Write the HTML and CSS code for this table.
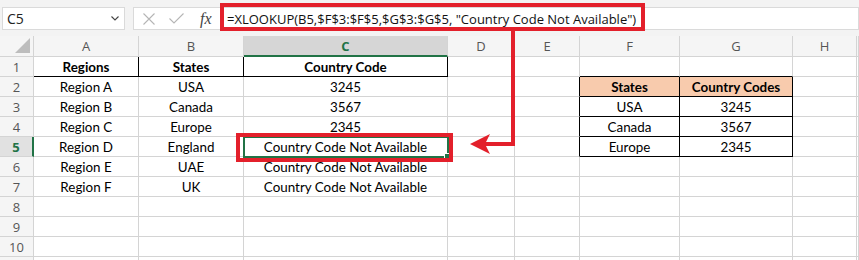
FILE: index.html
```html
<!DOCTYPE html>
<html lang="en">
<head>
    <meta charset="UTF-8">
    <title>XLOOKUP - not found value</title>
    <link rel="stylesheet" href="styles.css">
</head>
<body>
    <!-- Строка формул -->
    <div class="bar">
        <div class="namebox">
            <span>C5</span>
            <svg class="chev" width="8" height="5" viewBox="0 0 8 5"><path d="M0.5 0.5 L4 4 L7.5 0.5" fill="none" stroke="#444" stroke-width="1.1"/></svg>
        </div>
        <div class="fxbox">
            <svg width="12" height="12" viewBox="0 0 12 12"><path d="M0.5 0.5 L11.5 11.5 M11.5 0.5 L0.5 11.5" stroke="#b5b5b5" stroke-width="1.1"/></svg>
            <svg width="15" height="11" viewBox="0 0 15 11"><path d="M0.5 5.5 L5 10 L14.5 0.5" fill="none" stroke="#b5b5b5" stroke-width="1.1"/></svg>
            <span class="fx">fx</span>
        </div>
        <div class="formula">=XLOOKUP(B5,$F$3:$F$5,$G$3:$G$5, "Country Code Not Available")</div>
    </div>

    <!-- Лист -->
    <div class="sheet">
        <div class="corner"></div>
        <div class="colh">A</div><div class="colh">B</div><div class="colh sel">C</div><div class="colh">D</div><div class="colh">E</div><div class="colh">F</div><div class="colh">G</div><div class="colh">H</div><div class="colh"></div>

        <div class="rowh">1</div>
        <div class="c b br bb">Regions</div><div class="c b br bb">States</div><div class="c b br bb">Country Code</div><div class="c"></div><div class="c"></div><div class="c bb"></div><div class="c bb"></div><div class="c"></div><div class="c"></div>

        <div class="rowh">2</div>
        <div class="c">Region A</div><div class="c">USA</div><div class="c">3245</div><div class="c"></div><div class="c br"></div><div class="c b br bb peach">States</div><div class="c b br bb peach">Country Codes</div><div class="c"></div><div class="c"></div>

        <div class="rowh">3</div>
        <div class="c">Region B</div><div class="c">Canada</div><div class="c">3567</div><div class="c"></div><div class="c br"></div><div class="c br bb">USA</div><div class="c br bb">3245</div><div class="c"></div><div class="c"></div>

        <div class="rowh">4</div>
        <div class="c">Region C</div><div class="c">Europe</div><div class="c">2345</div><div class="c"></div><div class="c br"></div><div class="c br bb">Canada</div><div class="c br bb">3567</div><div class="c"></div><div class="c"></div>

        <div class="rowh sel">5</div>
        <div class="c">Region D</div><div class="c">England</div><div class="c active">Country Code Not Available</div><div class="c"></div><div class="c br"></div><div class="c br bb">Europe</div><div class="c br bb">2345</div><div class="c"></div><div class="c"></div>

        <div class="rowh">6</div>
        <div class="c">Region E</div><div class="c">UAE</div><div class="c">Country Code Not Available</div><div class="c"></div><div class="c"></div><div class="c"></div><div class="c"></div><div class="c"></div><div class="c"></div>

        <div class="rowh">7</div>
        <div class="c">Region F</div><div class="c">UK</div><div class="c">Country Code Not Available</div><div class="c"></div><div class="c"></div><div class="c"></div><div class="c"></div><div class="c"></div><div class="c"></div>

        <div class="rowh">8</div>
        <div class="c"></div><div class="c"></div><div class="c"></div><div class="c"></div><div class="c"></div><div class="c"></div><div class="c"></div><div class="c"></div><div class="c"></div>

        <div class="rowh">9</div>
        <div class="c"></div><div class="c"></div><div class="c"></div><div class="c"></div><div class="c"></div><div class="c"></div><div class="c"></div><div class="c"></div><div class="c"></div>

        <div class="rowh">10</div>
        <div class="c"></div><div class="c"></div><div class="c"></div><div class="c"></div><div class="c"></div><div class="c"></div><div class="c"></div><div class="c"></div><div class="c"></div>

        <!-- следующая строка уходит за нижний край -->
        <div class="rowh"></div>
        <div class="c"></div><div class="c"></div><div class="c"></div><div class="c"></div><div class="c"></div><div class="c"></div><div class="c"></div><div class="c"></div><div class="c"></div>
    </div>

    <!-- Красные пометки поверх листа -->
    <svg class="marks" width="859" height="260" viewBox="0 0 859 260">
        <rect x="222" y="5" width="421" height="24" fill="none" stroke="#e3202b" stroke-width="4"/>
        <rect x="238" y="135" width="213" height="25" fill="none" stroke="#e3202b" stroke-width="4"/>
        <path d="M513 31 V144 H484" fill="none" stroke="#e3202b" stroke-width="4"/>
        <path d="M470 144 L490 134 L485 144 L490 154 Z" fill="#e3202b"/>
    </svg>
</body>
</html>
```

FILE: styles.css
```css
body {
    margin: 0;
    width: 859px;
    height: 260px;
    overflow: hidden;
    position: relative;
    background-color: #fff;
    font-family: "Open Sans", sans-serif;
}
/* Строка формул */
.bar {
    height: 36px;
    box-sizing: border-box;
    padding: 7px 0 0 2px;
    display: flex;
    align-items: flex-start;
    background-color: #f3f3f3;
}
.namebox, .fxbox, .formula {
    height: 23px;
    box-sizing: border-box;
    background-color: #fff;
    border: 1px solid #dadada;
    display: flex;
    align-items: center;
}
.namebox {
    width: 123px;
    padding: 0 5px 0 4px;
    justify-content: space-between;
    font-size: 14px;
    color: #222;
}
.fxbox {
    width: 88px;
    margin-left: 8px;
    padding-left: 9px;
    gap: 14px;
}
.fx {
    font-family: "Liberation Serif", serif;
    font-style: italic;
    font-size: 16px;
    color: #444;
    margin-left: 2px;
}
.formula {
    flex: 1;
    padding-left: 5px;
    font-size: 13px;
    color: #111;
    white-space: nowrap;
}
/* Сетка листа */
.sheet {
    display: grid;
    grid-template-columns: 34px 105px 105px 204px 67px 65px 100px 113px 64px 1fr;
    grid-template-rows: 21px;
    grid-auto-rows: 20px;
}
.corner, .colh, .rowh {
    background-color: #f5f5f5;
    border-right: 1px solid #d4d4d4;
    border-bottom: 1px solid #d4d4d4;
    box-sizing: border-box;
    color: #555;
    font-size: 13px;
    display: flex;
    align-items: center;
    justify-content: center;
}
.corner {
    position: relative;
}
.corner::after {
    content: "";
    position: absolute;
    right: 3px;
    bottom: 3px;
    border-style: solid;
    border-width: 0 0 15px 15px;
    border-color: transparent transparent #bdbdbd transparent;
}
.colh.sel {
    background-color: #d6d6d6;
    border-bottom: 2px solid #217346;
    color: #217346;
    font-weight: bold;
}
.rowh.sel {
    background-color: #e1e1e1;
    border-right: 2px solid #217346;
    color: #217346;
    font-weight: bold;
}
.c {
    border-right: 1px solid #d4d4d4;
    border-bottom: 1px solid #d4d4d4;
    box-sizing: border-box;
    font-family: Lato, sans-serif;
    font-size: 13.4px;
    color: #000;
    text-align: center;
    line-height: 21px;
    white-space: nowrap;
}
.b {
    font-weight: bold;
}
.br {
    border-right-color: #000;
}
.bb {
    border-bottom-color: #000;
}
.peach {
    background-color: #f8cbad;
}
.active {
    position: relative;
    outline: 2px solid #217346;
    outline-offset: -1px;
}
.active::after {
    content: "";
    position: absolute;
    right: -3px;
    bottom: -3px;
    width: 4px;
    height: 4px;
    background-color: #217346;
    border: 1px solid #fff;
}
.marks {
    position: absolute;
    top: 0;
    left: 0;
    pointer-events: none;
}
```
